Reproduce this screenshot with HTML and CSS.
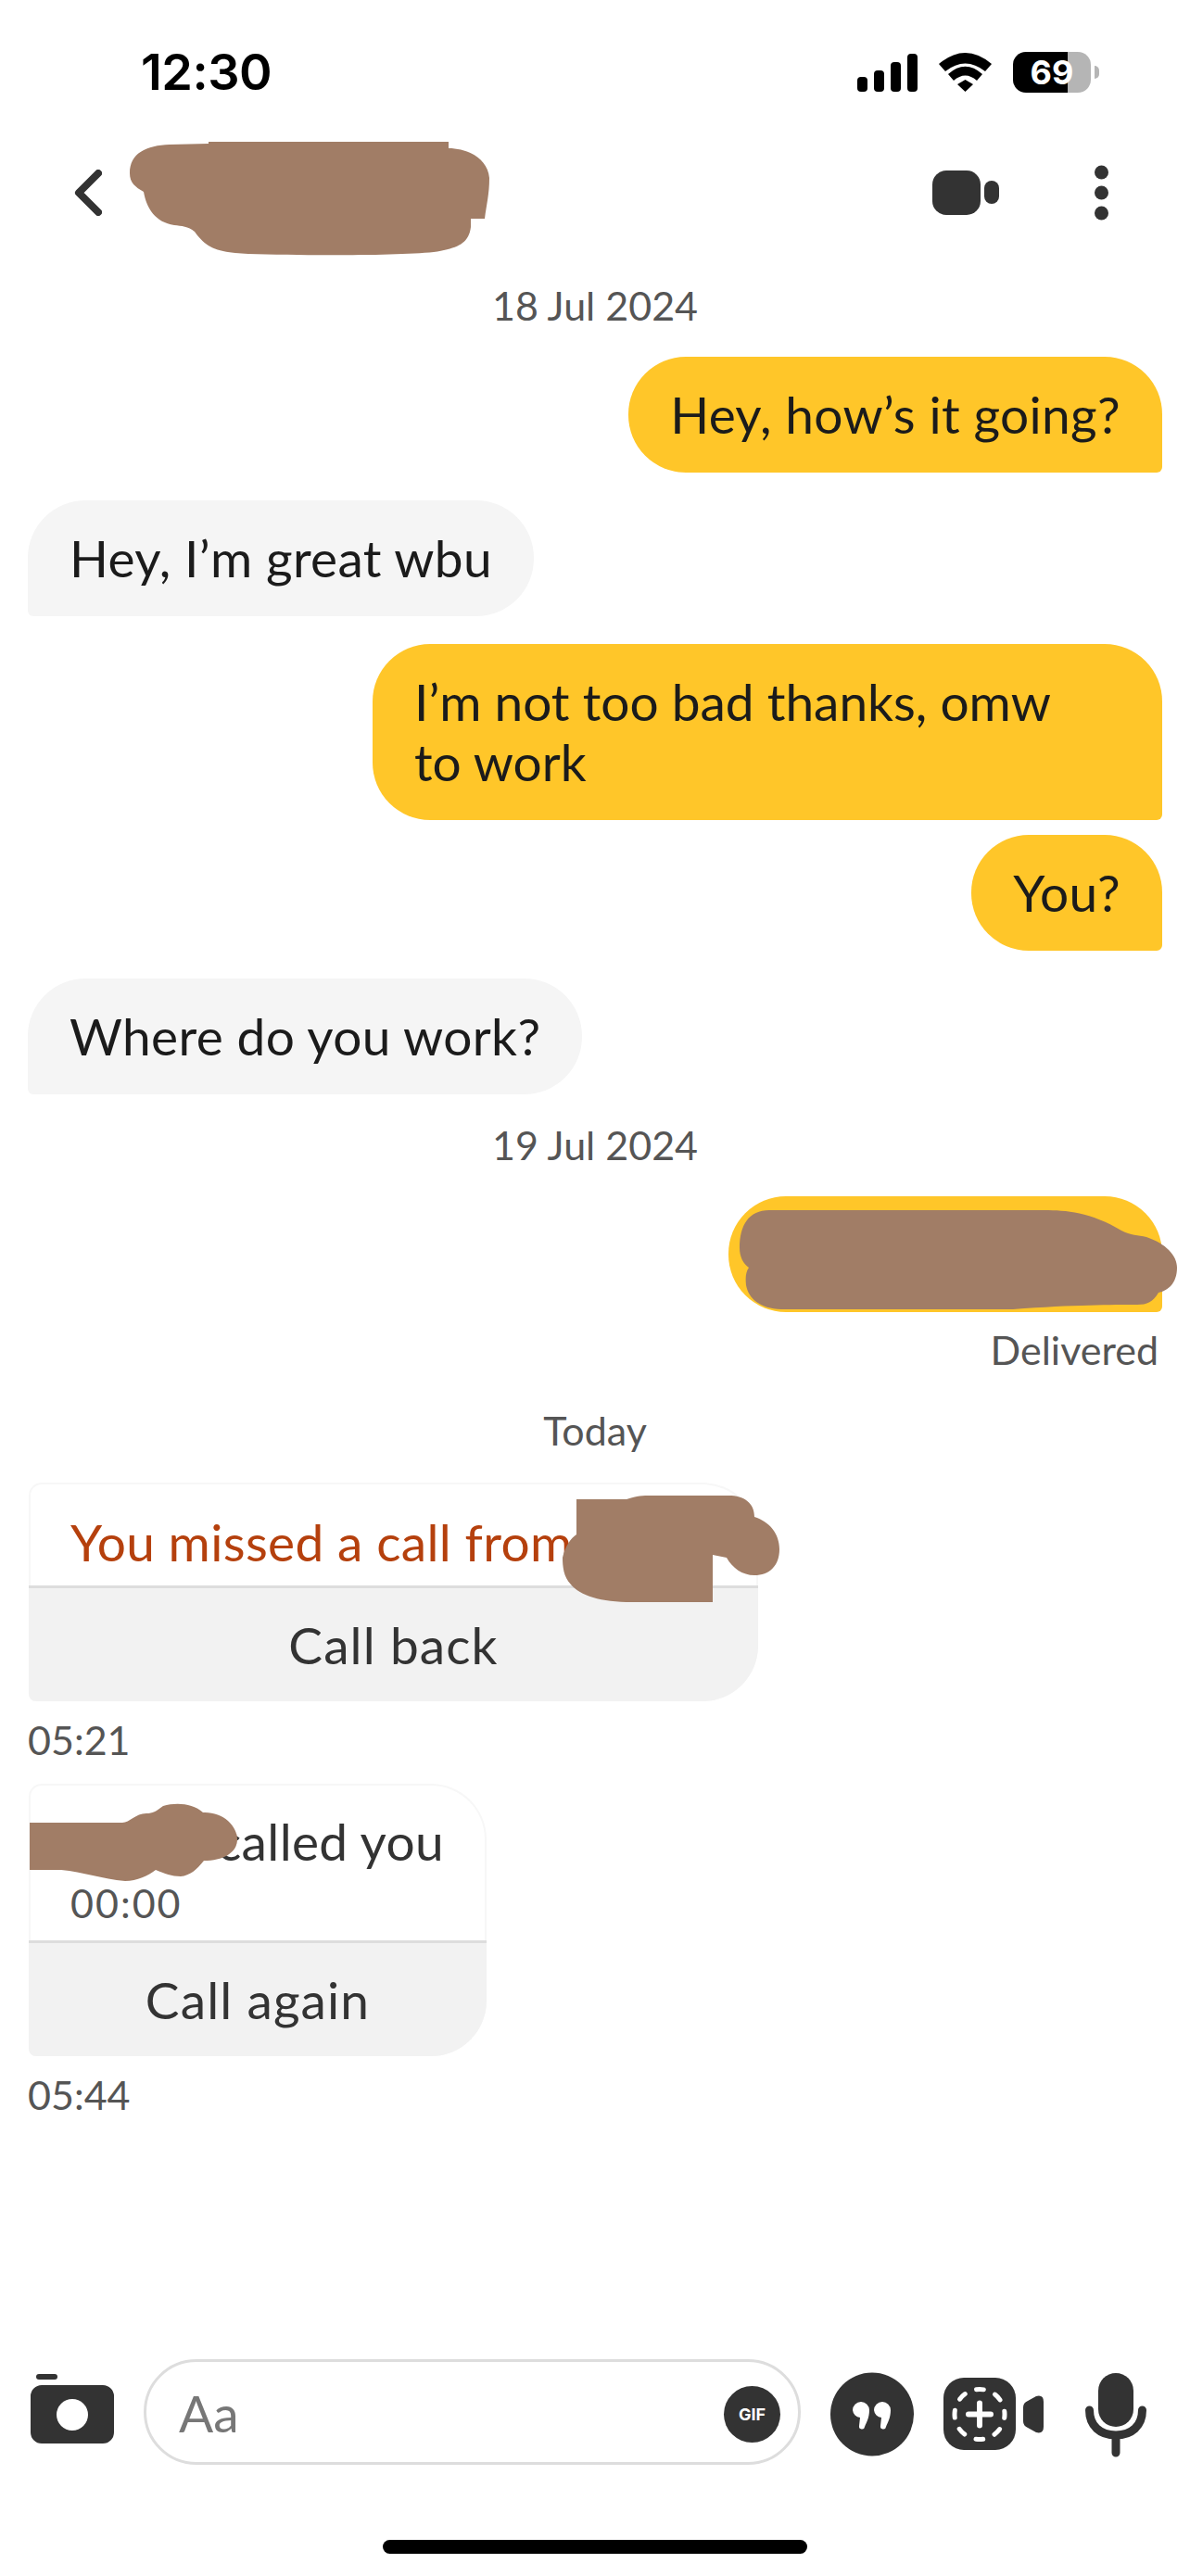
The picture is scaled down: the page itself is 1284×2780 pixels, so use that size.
FILE: index.html
```html
<!DOCTYPE html>
<html lang="en">
<head>
<meta charset="utf-8">
<title>Chat</title>
<link rel="stylesheet" href="styles.css">
</head>
<body>
<div class="page">
  <div class="status">
    <span class="time">12:30</span>
    <div class="status-icons">
      <svg class="signal" width="65" height="41" viewBox="0 0 65 41"><rect x="0" y="25" width="11" height="16" rx="4"/><rect x="18" y="18" width="11" height="23" rx="4"/><rect x="36" y="9" width="11" height="32" rx="4"/><rect x="54" y="0" width="11" height="41" rx="4"/></svg>
      <svg class="wifi" width="57" height="42" viewBox="0 0 57 42"><path d="M0 12Q28.500-12 57 12L50 20Q28.500 3 7 20Z"/><path d="M10 23Q28.500 6.500 47 23L41 30Q28.500 19 16 30Z"/><path d="M20 34L28.500 29L37 34L28.500 42Z"/></svg>
      <div class="battery"><span class="battery-level">69</span></div>
    </div>
  </div>

  <header class="header">
    <svg class="back" width="30" height="50" viewBox="0 0 30 50"><path d="M26 4L5 25L26 46" fill="none" stroke="#333" stroke-width="8" stroke-linecap="round" stroke-linejoin="round"/></svg>
    <div class="header-actions">
      <svg width="72" height="48" viewBox="0 0 72 48"><rect x="0" y="0" width="52" height="48" rx="15" fill="#333"/><rect x="56" y="11" width="16" height="25" rx="8" fill="#333"/></svg>
      <svg width="15" height="60" viewBox="0 0 15 60"><circle cx="7.500" cy="8" r="7.500" fill="#333"/><circle cx="7.500" cy="30" r="7.500" fill="#333"/><circle cx="7.500" cy="52" r="7.500" fill="#333"/></svg>
    </div>
  </header>

  <main class="chat">
    <p class="stamp stamp-first">18 Jul 2024</p>
    <div class="bubble sent gap-m">Hey, how’s it going?</div>
    <div class="bubble received gap-m">Hey, I’m great wbu</div>
    <div class="bubble sent gap-m wide">I’m not too bad thanks, omw<br>to work</div>
    <div class="bubble sent gap-s">You?</div>
    <div class="bubble received gap-m">Where do you work?</div>
    <p class="stamp stamp-mid">19 Jul 2024</p>
    <div class="bubble sent gap-m hidden-msg">Hidden text</div>
    <p class="delivered">Delivered</p>
    <p class="stamp stamp-today">Today</p>
    <div class="card card-missed">
      <div class="card-body"><span class="missed">You missed a call from</span></div>
      <div class="card-action">Call back</div>
    </div>
    <p class="time-left">05:21</p>
    <div class="card card-called">
      <div class="card-body">
        <span class="called">called you</span>
        <span class="duration">00:00</span>
      </div>
      <div class="card-action">Call again</div>
    </div>
    <p class="time-left">05:44</p>
  </main>

  <footer class="composer">
    <svg class="icon" width="90" height="114" viewBox="0 0 90 114"><rect x="6" y="16" width="23" height="6" rx="3" fill="#333"/><path fill-rule="evenodd" fill="#333" d="M12 28H78A12 12 0 0 1 90 40V79A12 12 0 0 1 78 91H12A12 12 0 0 1 0 79V40A12 12 0 0 1 12 28ZM45 43A17 17 0 1 0 45 77A17 17 0 1 0 45 43Z"/></svg>
    <div class="input">
      <span class="placeholder">Aa</span>
      <span class="gif">GIF</span>
    </div>
    <svg class="icon" width="90" height="114" viewBox="0 -2 90 114"><circle cx="45" cy="57.500" r="45" fill="#333"/><path fill="#fff" d="M24 53a9 9 0 0 1 18 0c0 8-3 13-5 18a3 3 0 0 1-6-1l1-9a9 9 0 0 1-8-8z"/><path fill="#fff" d="M47 53a9 9 0 0 1 18 0c0 8-3 13-5 18a3 3 0 0 1-6-1l1-9a9 9 0 0 1-8-8z"/></svg>
    <svg class="icon" width="108" height="114" viewBox="0 -2 108 114"><rect x="0" y="18" width="78" height="78" rx="22" fill="#333"/><circle cx="39" cy="57.500" r="27" fill="none" stroke="#fff" stroke-width="5" stroke-linecap="round" stroke-dasharray="8 13.200" stroke-dashoffset="4"/><path d="M27 57.500H51M39 45.500V69.500" stroke="#fff" stroke-width="6" stroke-linecap="round"/><path fill="#333" d="M86 50Q86 45 91 43L100 38Q108 36 108 44V71Q108 79 100 77L91 72Q86 70 86 65Z"/></svg>
    <svg class="icon icon-mic" width="66" height="114" viewBox="0 -2 66 114"><rect x="14" y="13" width="38" height="58" rx="19" fill="#333"/><path d="M4.500 53C4.500 70 16 80 33 80C50 80 61.500 70 61.500 53M33 80V99" fill="none" stroke="#333" stroke-width="9" stroke-linecap="round"/></svg>
  </footer>

  <div class="home-bar"></div>

  <svg class="scribbles" width="1284" height="2780" viewBox="0 0 1284 2780" aria-hidden="true">
    <path transform="translate(-2 0)" d="M142 187C142 165 160 157 185 156L227 155V153H486V160C505 160 528 170 530 192C530 210 527 220 525 236H510V245C508 262 497 268 470 272C430 276 330 276 270 274C235 272 225 268 212 250C205 244 198 244 190 243C170 240 160 225 157 207C148 202 142 197 142 187Z"/>
    <path d="M798 1347C798 1322 808 1306 830 1306H1127C1150 1306 1177 1308 1210 1328C1220 1333 1228 1333 1237 1335C1258 1342 1270 1355 1270 1368C1270 1385 1260 1393 1250 1395C1244 1405 1238 1408 1227 1408C1200 1408 1160 1408 1093 1413H843C820 1412 808 1402 805 1387C804 1378 805 1372 808 1368C802 1364 798 1356 798 1347Z"/>
    <path transform="translate(-2 0)" d="M624 1618H678C690 1614 695 1614 705 1614H788C805 1614 816 1622 816 1637C832 1642 843 1655 843 1672C843 1690 832 1700 816 1700C803 1700 792 1692 786 1681L771 1678V1729H684C650 1729 628 1722 618 1710C610 1702 609 1690 609 1681C612 1668 618 1660 624 1656Z"/>
    <path d="M32 1967H132C140 1967 146 1957 158 1957C165 1957 168 1955 176 1949C190 1945 208 1946 219 1956C240 1955 256 1970 256 1985C256 2000 240 2008 220 2008C212 2018 205 2024 195 2025C185 2025 178 2022 168 2018C160 2024 148 2030 135 2030C110 2028 90 2020 66 2018H32Z"/>
  </svg>
</div>
</body>
</html>
```

FILE: styles.css
```css
* { box-sizing: border-box; }
html, body { margin: 0; padding: 0; background: #fff; }
p { margin: 0; }

.page {
  position: relative;
  width: 1284px;
  height: 2780px;
  display: flex;
  flex-direction: column;
  overflow: hidden;
  font-family: "Lato", "Noto Sans", sans-serif;
  color: #1b1b1b;
}

.status {
  height: 156px;
  flex: none;
  display: flex;
  align-items: center;
  justify-content: space-between;
  padding: 0 107px 0 152px;
}
.time { font: 600 54px/1 "Inter", sans-serif; color: #000; letter-spacing: -0.5px; }
.status-icons { display: flex; align-items: center; gap: 23px; }
.battery {
  position: relative;
  width: 84px;
  height: 44px;
  border-radius: 14px;
  background: linear-gradient(to right, #000 70%, #b5b5b5 70%);
  display: flex;
  align-items: center;
  justify-content: center;
}
.battery::after {
  content: "";
  position: absolute;
  left: 88px;
  top: 15px;
  width: 5px;
  height: 14px;
  border-radius: 0 7px 7px 0;
  background: #b5b5b5;
}
.battery-level { font: 700 36px/1 "Inter", sans-serif; color: #fff; }

.header {
  height: 104px;
  flex: none;
  display: flex;
  align-items: center;
  justify-content: space-between;
  padding: 0 88px 0 80px;
}
.header-actions { display: flex; align-items: center; gap: 103px; }

.chat {
  flex: 1;
  display: flex;
  flex-direction: column;
  padding: 0 30px;
}
.stamp {
  font-size: 43px;
  line-height: 50px;
  color: #555;
  text-align: center;
}
.stamp-first { margin-top: 45px; }
.stamp-mid { margin-top: 30px; }
.stamp-today { margin-top: 37px; margin-bottom: 31px; }

.bubble {
  max-width: 852px;
  padding: 30px 45px;
  font-size: 55px;
  letter-spacing: 0.35px;
  line-height: 65px;
  width: fit-content;
}
.wide { width: 852px; letter-spacing: 0; }
.sent {
  align-self: flex-end;
  background: #ffc629;
  border-radius: 62px 62px 6px 62px;
}
.received {
  align-self: flex-start;
  background: #f5f5f5;
  border-radius: 62px 62px 62px 6px;
}
.gap-m { margin-top: 30px; }
.gap-s { margin-top: 16px; }
.hidden-msg { width: 468px; height: 125px; white-space: nowrap; }

.delivered {
  align-self: flex-end;
  margin-top: 16px;
  padding-right: 4px;
  font-size: 43px;
  line-height: 50px;
  color: #555;
}

.card {
  margin-left: 1px;
  display: flex;
  flex-direction: column;
  border-radius: 14px 60px 60px 8px;
  overflow: hidden;
  box-shadow: inset 0 0 0 2px #f7f7f7;
}
.card-missed { width: 787px; height: 236px; }
.card-called { width: 494px; height: 294px; }
.card-body {
  flex: 1;
  display: flex;
  flex-direction: column;
  padding: 0 45px;
  border-bottom: 3px solid #ddd;
  font-size: 55px;
  letter-spacing: 0.35px;
}
.missed { margin-top: 32px; line-height: 65px; color: #b5400d; white-space: nowrap; }
.called { margin-top: 30px; padding-left: 158px; line-height: 65px; color: #333; white-space: nowrap; }
.duration { margin-top: 3px; font-size: 43px; line-height: 62px; color: #555; letter-spacing: 2px; }
.card-action {
  height: 122px;
  flex: none;
  background: #f2f2f2;
  display: flex;
  align-items: center;
  justify-content: center;
  font-size: 55px;
  letter-spacing: 1.1px;
  color: #333;
}
.time-left {
  margin-top: 17px;
  margin-bottom: 22px;
  font-size: 43px;
  line-height: 50px;
  color: #555;
}

.composer {
  height: 114px;
  flex: none;
  margin-bottom: 81px;
  padding-left: 33px;
  display: flex;
  align-items: center;
  gap: 32px;
}
.icon { display: block; flex: none; }
.icon-mic { margin-left: 13px; }
.input {
  width: 709px;
  height: 114px;
  flex: none;
  border: 3px solid #ddd;
  border-radius: 57px;
  padding: 2px 19px 0 35px;
  display: flex;
  align-items: center;
  justify-content: space-between;
}
.placeholder { font-size: 55px; color: #777; }
.gif {
  width: 61px;
  height: 61px;
  margin-top: 3px;
  border-radius: 50%;
  background: #333;
  color: #fff;
  font: 700 18px/61px "Inter", sans-serif;
  text-align: center;
}

.home-bar {
  width: 458px;
  height: 15px;
  flex: none;
  margin: 0 0 24px 413px;
  border-radius: 8px;
  background: #000;
}

.scribbles { position: absolute; left: 0; top: 0; fill: #a17d66; pointer-events: none; }
```
